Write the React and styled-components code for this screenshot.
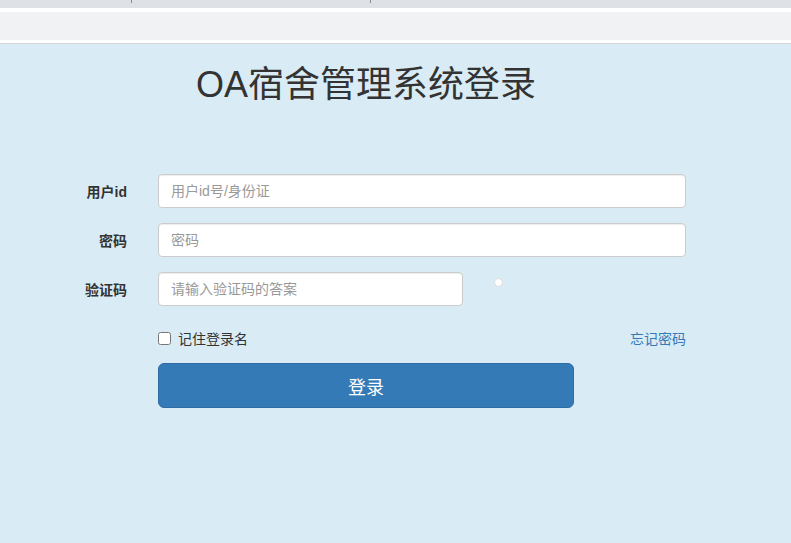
import styled, { createGlobalStyle } from "styled-components";

const GlobalStyle = createGlobalStyle`
    html, body {
        margin: 0;
        padding: 0;
        background: #ffffff;
    }
    body {
        font-family: "Liberation Sans", "Noto Sans CJK SC", sans-serif;
        font-size: 14px;
        color: #333;
    }
`;

const S = {
    Page : styled.div`
        display: flex;
        flex-direction: column;
        width: 100%;
        height: 543px;
        overflow: hidden;
    `,
    TopStrip : styled.div`
        display: flex;
        align-items: flex-start;
        height: 8px;
        background: #dee1e5;
        padding-left: 131px;
        gap: 238px;
    `,
    Tick : styled.span`
        width: 1px;
        height: 3px;
        background: #8a8d91;
    `,
    NavBar : styled.div`
        height: 28px;
        margin-top: 4px;
        background: #f1f2f3;
        border-bottom: 3px solid #ffffff;
        box-shadow: 0 1px 0 #d3d6da;
    `,
    Main : styled.div`
        flex: 1;
        margin-top: 1px;
        background: #d9ecf5;
        display: flex;
        flex-direction: column;
    `,
    Title : styled.h1`
        width: 732px;
        margin: 21px 0 0;
        text-align: center;
        font-size: 36px;
        font-weight: 400;
        line-height: 40px;
        color: #333;
        font-family: "Liberation Sans", "Noto Sans CJK SC", sans-serif;
    `,
    Form : styled.form`
        display: flex;
        flex-direction: column;
        gap: 15px;
        margin-top: 69px;
    `,
    Row : styled.div`
        display: flex;
        align-items: ${(p) => (p.$top ? "flex-start" : "center")};
        gap: 31px;
    `,
    Label : styled.label`
        width: 127px;
        align-self: center;
        text-align: right;
        font-size: 14px;
        font-weight: 700;
        color: #333;
    `,
    Input : styled.input`
        box-sizing: border-box;
        width: ${(p) => p.$width || 528}px;
        height: 34px;
        padding: 6px 12px;
        font-size: 14px;
        font-family: "Liberation Sans", "Noto Sans CJK SC", sans-serif;
        color: #555;
        background: #fff;
        border: 1px solid #ccc;
        border-radius: 4px;
        box-shadow: inset 0 1px 1px rgba(0, 0, 0, 0.075);
        outline: none;
        &::placeholder {
            color: #999;
        }
    `,
    CaptchaImage : styled.span`
        width: 9px;
        height: 9px;
        margin-top: 6px;
        border-radius: 50%;
        background: #fff;
        border: 1px solid #dcdcdc;
        box-sizing: border-box;
    `,
    OptionRow : styled.div`
        display: flex;
        justify-content: space-between;
        align-items: center;
        width: 528px;
        margin: 7px 0 0 158px;
        height: 20px;
    `,
    Remember : styled.label`
        display: flex;
        align-items: center;
        gap: 7px;
        font-size: 14px;
        color: #333;
        input {
            margin: 0;
            width: 13px;
            height: 13px;
        }
    `,
    Forget : styled.a`
        font-size: 14px;
        color: #337ab7;
        text-decoration: none;
    `,
    SubmitButton : styled.button`
        width: 416px;
        height: 45px;
        margin-left: 158px;
        background: #337ab7;
        border: 1px solid #2e6da4;
        border-radius: 6px;
        color: #fff;
        font-size: 18px;
        font-family: "Liberation Sans", "Noto Sans CJK SC", sans-serif;
        cursor: pointer;
    `,
};

const App = () => {
    return (
        <>
            <GlobalStyle />
            <S.Page>
                <S.TopStrip>
                    <S.Tick />
                    <S.Tick />
                </S.TopStrip>
                <S.NavBar />
                <S.Main>
                    <S.Title>OA宿舍管理系统登录</S.Title>
                    <S.Form onSubmit={(e) => e.preventDefault()}>
                        <S.Row>
                            <S.Label>用户id</S.Label>
                            <S.Input placeholder="用户id号/身份证" />
                        </S.Row>
                        <S.Row>
                            <S.Label>密码</S.Label>
                            <S.Input type="password" placeholder="密码" />
                        </S.Row>
                        <S.Row $top>
                            <S.Label>验证码</S.Label>
                            <S.Input $width={305} placeholder="请输入验证码的答案" />
                            <S.CaptchaImage />
                        </S.Row>
                        <S.OptionRow>
                            <S.Remember>
                                <input type="checkbox" />
                                记住登录名
                            </S.Remember>
                            <S.Forget href="#">忘记密码</S.Forget>
                        </S.OptionRow>
                        <S.SubmitButton type="submit">登录</S.SubmitButton>
                    </S.Form>
                </S.Main>
            </S.Page>
        </>
    );
};

export default App;
